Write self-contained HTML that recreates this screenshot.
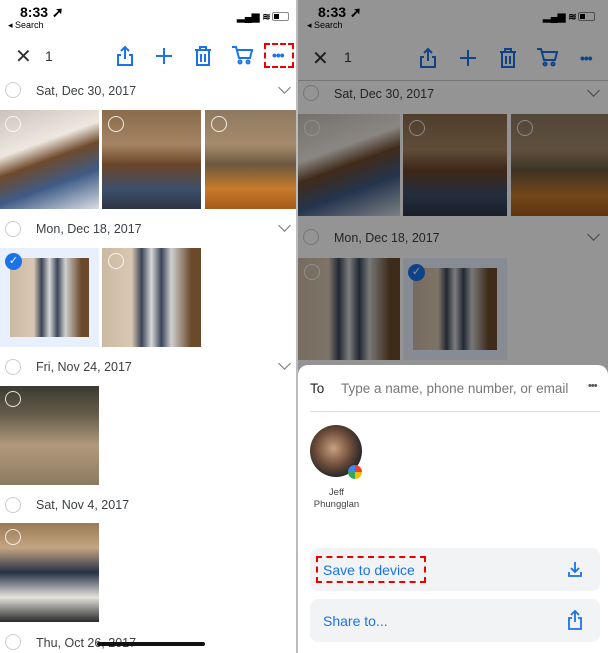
<!DOCTYPE html><html><head><style>
*{margin:0;padding:0;box-sizing:border-box}
body{width:608px;height:653px;overflow:hidden;background:#fff;font-family:"Liberation Sans",sans-serif;position:relative}
.a{position:absolute}
.hd{position:absolute;font-size:12.5px;color:#3c4043}
.circ{position:absolute;width:16px;height:16px;border:1.5px solid #ccc;border-radius:50%}
.wc{position:absolute;width:16px;height:16px;border:1.5px solid rgba(255,255,255,.85);border-radius:50%}
.chev{position:absolute;width:9px;height:9px;border-right:1.5px solid #777;border-bottom:1.5px solid #777;transform:rotate(45deg)}
.p1{background:linear-gradient(160deg,#c9c3bb 0%,#ede7df 35%,#6f4a2c 50%,#3e5b85 70%,#d9dde5 100%)}
.p2{background:linear-gradient(180deg,#8a6b4c 0%,#a58462 35%,#6b4528 55%,#3d4f6b 80%,#2d3545 100%)}
.p3{background:linear-gradient(180deg,#8e7960 0%,#a58b6c 35%,#6c5840 55%,#c77a2b 80%,#a55a1c 100%)}
.p4{background:linear-gradient(90deg,#cbb9a3 0%,#d8c7b2 30%,#3a4558 40%,#d8d8d8 50%,#3a4558 60%,#cfcfcf 70%,#6b4a2c 90%)}
.p5{background:linear-gradient(180deg,#3a3a30 0%,#6a5e4c 30%,#b09a7c 60%,#8c7a60 100%)}
.p6{background:linear-gradient(180deg,#9a7a55 0%,#c4a582 25%,#263245 50%,#e4e2dc 75%,#2a2a2a 100%)}
</style></head><body>
<!-- LEFT -->
<div class="a" style="left:0;top:0;width:297px;height:653px;background:#fff"></div>
<div class="a" style="left:20px;top:4px;font-size:14px;font-weight:bold;color:#000">8:33 ➚</div>
<div class="a" style="left:8px;top:20px;font-size:9px;color:#000">◂ Search</div>
<div class="a" style="left:237px;top:12px;font-size:10px;font-weight:bold">▂▄▆ ≋</div>
<div class="a" style="left:272px;top:12px;width:17px;height:9px;border:1px solid #888;border-radius:2px"><div style="width:5px;height:5px;margin:1px;background:#000"></div></div>
<div class="a" style="left:15px;top:44px;font-size:20px;color:#333">✕</div>
<div class="a" style="left:45px;top:48px;font-size:14px;color:#333">1</div>
<svg class="a" style="left:115px;top:45px" width="20" height="22" viewBox="0 0 20 22" fill="none" stroke="#1a73e8" stroke-width="2"><path d="M10 2v12M6 6l4-4 4 4M6 10H3v10h14V10h-3"/></svg>
<svg class="a" style="left:155px;top:47px" width="18" height="18" stroke="#1a73e8" stroke-width="2"><path d="M9 1v16M1 9h16"/></svg>
<svg class="a" style="left:194px;top:46px" width="18" height="20" fill="none" stroke="#1a73e8" stroke-width="2"><path d="M1 4h16M6 4V1h6v3M3 4v15h12V4M7 8v8M11 8v8"/></svg>
<svg class="a" style="left:231px;top:45px" width="22" height="20" fill="none" stroke="#1a73e8" stroke-width="2"><path d="M1 2h4l3 11h11l2-8H6"/><circle cx="9" cy="17" r="1.5"/><circle cx="17" cy="17" r="1.5"/></svg>
<div class="a" style="left:264px;top:43px;width:30px;height:25px;border:2.5px dashed #e00"></div>
<div class="a" style="left:272px;top:47px;font-size:14px;color:#1a73e8;font-weight:bold;letter-spacing:-1px">•••</div>

<div class="circ" style="left:5px;top:82px"></div><div class="hd" style="left:36px;top:84px">Sat, Dec 30, 2017</div><div class="chev" style="left:280px;top:83px"></div>
<div class="a p1" style="left:0;top:110px;width:99px;height:99px"></div>
<div class="a p2" style="left:102px;top:110px;width:99px;height:99px"></div>
<div class="a p3" style="left:205px;top:110px;width:92px;height:99px"></div>
<div class="wc" style="left:5px;top:116px"></div><div class="wc" style="left:108px;top:116px"></div><div class="wc" style="left:211px;top:116px"></div>

<div class="circ" style="left:5px;top:221px"></div><div class="hd" style="left:36px;top:222px">Mon, Dec 18, 2017</div><div class="chev" style="left:280px;top:221px"></div>
<div class="a" style="left:0;top:248px;width:99px;height:99px;background:#e8f0fe"></div>
<div class="a p4" style="left:10px;top:258px;width:79px;height:79px"></div>
<div class="a" style="left:5px;top:253px;width:17px;height:17px;border-radius:50%;background:#1a73e8;color:#fff;font-size:11px;text-align:center;line-height:17px">✓</div>
<div class="a p4" style="left:102px;top:248px;width:99px;height:99px"></div>
<div class="wc" style="left:108px;top:253px"></div>

<div class="circ" style="left:5px;top:359px"></div><div class="hd" style="left:36px;top:360px">Fri, Nov 24, 2017</div><div class="chev" style="left:280px;top:359px"></div>
<div class="a p5" style="left:0;top:386px;width:99px;height:99px"></div><div class="wc" style="left:5px;top:391px"></div>

<div class="circ" style="left:5px;top:497px"></div><div class="hd" style="left:36px;top:498px">Sat, Nov 4, 2017</div>
<div class="a p6" style="left:0;top:523px;width:99px;height:99px"></div><div class="wc" style="left:5px;top:529px"></div>
<div class="circ" style="left:5px;top:634px"></div><div class="hd" style="left:36px;top:636px">Thu, Oct 26, 2017</div>
<div class="a" style="left:97px;top:642px;width:108px;height:4px;background:#111;border-radius:2px"></div>
<div class="a" style="left:296px;top:0;width:2px;height:653px;background:#bbb"></div>

<!-- RIGHT -->
<div class="a" style="left:298px;top:0;width:310px;height:653px;background:#fff;overflow:hidden">
<div class="a" style="left:20px;top:4px;font-size:14px;font-weight:bold">8:33 ➚</div>
<div class="a" style="left:9px;top:20px;font-size:9px">◂ Search</div>
<div class="a" style="left:245px;top:12px;font-size:10px;font-weight:bold">▂▄▆ ≋</div>
<div class="a" style="left:280px;top:12px;width:17px;height:9px;border:1px solid #888;border-radius:2px"><div style="width:5px;height:5px;margin:1px;background:#000"></div></div>
<div class="a" style="left:14px;top:46px;font-size:20px;color:#333">✕</div>
<div class="a" style="left:46px;top:49px;font-size:14px;color:#333">1</div>
<svg class="a" style="left:120px;top:47px" width="20" height="22" fill="none" stroke="#1a73e8" stroke-width="2"><path d="M10 2v12M6 6l4-4 4 4M6 10H3v10h14V10h-3"/></svg>
<svg class="a" style="left:161px;top:49px" width="18" height="18" stroke="#1a73e8" stroke-width="2"><path d="M9 1v16M1 9h16"/></svg>
<svg class="a" style="left:201px;top:48px" width="18" height="20" fill="none" stroke="#1a73e8" stroke-width="2"><path d="M1 4h16M6 4V1h6v3M3 4v15h12V4M7 8v8M11 8v8"/></svg>
<svg class="a" style="left:238px;top:47px" width="22" height="20" fill="none" stroke="#1a73e8" stroke-width="2"><path d="M1 2h4l3 11h11l2-8H6"/><circle cx="9" cy="17" r="1.5"/><circle cx="17" cy="17" r="1.5"/></svg>
<div class="a" style="left:282px;top:50px;font-size:14px;color:#1a73e8;font-weight:bold;letter-spacing:-1px">•••</div>
<div class="a" style="left:0;top:80px;width:310px;height:1px;background:#ccc"></div>
<div class="circ" style="left:5px;top:85px"></div><div class="hd" style="left:36px;top:87px">Sat, Dec 30, 2017</div><div class="chev" style="left:291px;top:86px"></div>
<div class="a p1" style="left:0;top:114px;width:102px;height:102px"></div>
<div class="a p2" style="left:105px;top:114px;width:104px;height:102px"></div>
<div class="a p3" style="left:213px;top:114px;width:97px;height:102px"></div>
<div class="wc" style="left:6px;top:120px"></div><div class="wc" style="left:111px;top:120px"></div><div class="wc" style="left:219px;top:120px"></div>
<div class="circ" style="left:5px;top:229px"></div><div class="hd" style="left:36px;top:231px">Mon, Dec 18, 2017</div><div class="chev" style="left:291px;top:230px"></div>
<div class="a p4" style="left:0;top:258px;width:102px;height:102px"></div><div class="wc" style="left:6px;top:264px"></div>
<div class="a" style="left:105px;top:258px;width:104px;height:102px;background:#e8f0fe"></div>
<div class="a p4" style="left:115px;top:268px;width:84px;height:82px"></div>
<div class="a" style="left:110px;top:264px;width:17px;height:17px;border-radius:50%;background:#1a73e8;color:#fff;font-size:11px;text-align:center;line-height:17px">✓</div>
<div class="a" style="left:0;top:0;width:310px;height:653px;background:rgba(0,0,0,.42)"></div>
<div class="a" style="left:0;top:365px;width:310px;height:290px;background:#fff;border-radius:10px 10px 0 0"></div>
<div class="a" style="left:12px;top:381px;font-size:13.5px;color:#222">To</div>
<div class="a" style="left:43px;top:381px;font-size:13.5px;color:#777">Type a name, phone number, or email</div>
<div class="a" style="left:290px;top:380px;font-size:11px;color:#555;letter-spacing:-1px">•••</div>
<div class="a" style="left:12px;top:411px;width:290px;height:1px;background:#ddd"></div>
<div class="a" style="left:12px;top:425px;width:52px;height:52px;border-radius:50%;background:radial-gradient(circle at 45% 45%,#c9a080 0%,#6b4a38 45%,#2a2a2a 70%,#4a6080 100%)"></div>
<div class="a" style="left:50px;top:465px;width:14px;height:14px;border-radius:50%;background:conic-gradient(#ea4335 0 25%,#fbbc04 0 50%,#34a853 0 75%,#4285f4 0)"></div>
<div class="a" style="left:0;top:487px;width:77px;text-align:center;font-size:9.5px;color:#444;line-height:12px">Jeff<br>Phungglan</div>
<div class="a" style="left:12px;top:548px;width:290px;height:43px;background:#f1f3f4;border-radius:8px"></div>
<div class="a" style="left:18px;top:556px;width:110px;height:27px;border:2.5px dashed #e00"></div>
<div class="a" style="left:25px;top:562px;font-size:14px;color:#1a73e8">Save to device</div>
<svg class="a" style="left:270px;top:561px" width="14" height="16" fill="none" stroke="#1a73e8" stroke-width="1.8"><path d="M7 1v10M3 7l4 4 4-4M1 11v4h12v-4"/></svg>
<div class="a" style="left:12px;top:599px;width:290px;height:43px;background:#f1f3f4;border-radius:8px"></div>
<div class="a" style="left:25px;top:613px;font-size:14px;color:#1a73e8">Share to...</div>
<svg class="a" style="left:270px;top:610px" width="14" height="20" fill="none" stroke="#1a73e8" stroke-width="1.8"><path d="M7 1v11M3 5l4-4 4 4M4 8H1v11h12V8h-3"/></svg>
</div>
</body></html>
